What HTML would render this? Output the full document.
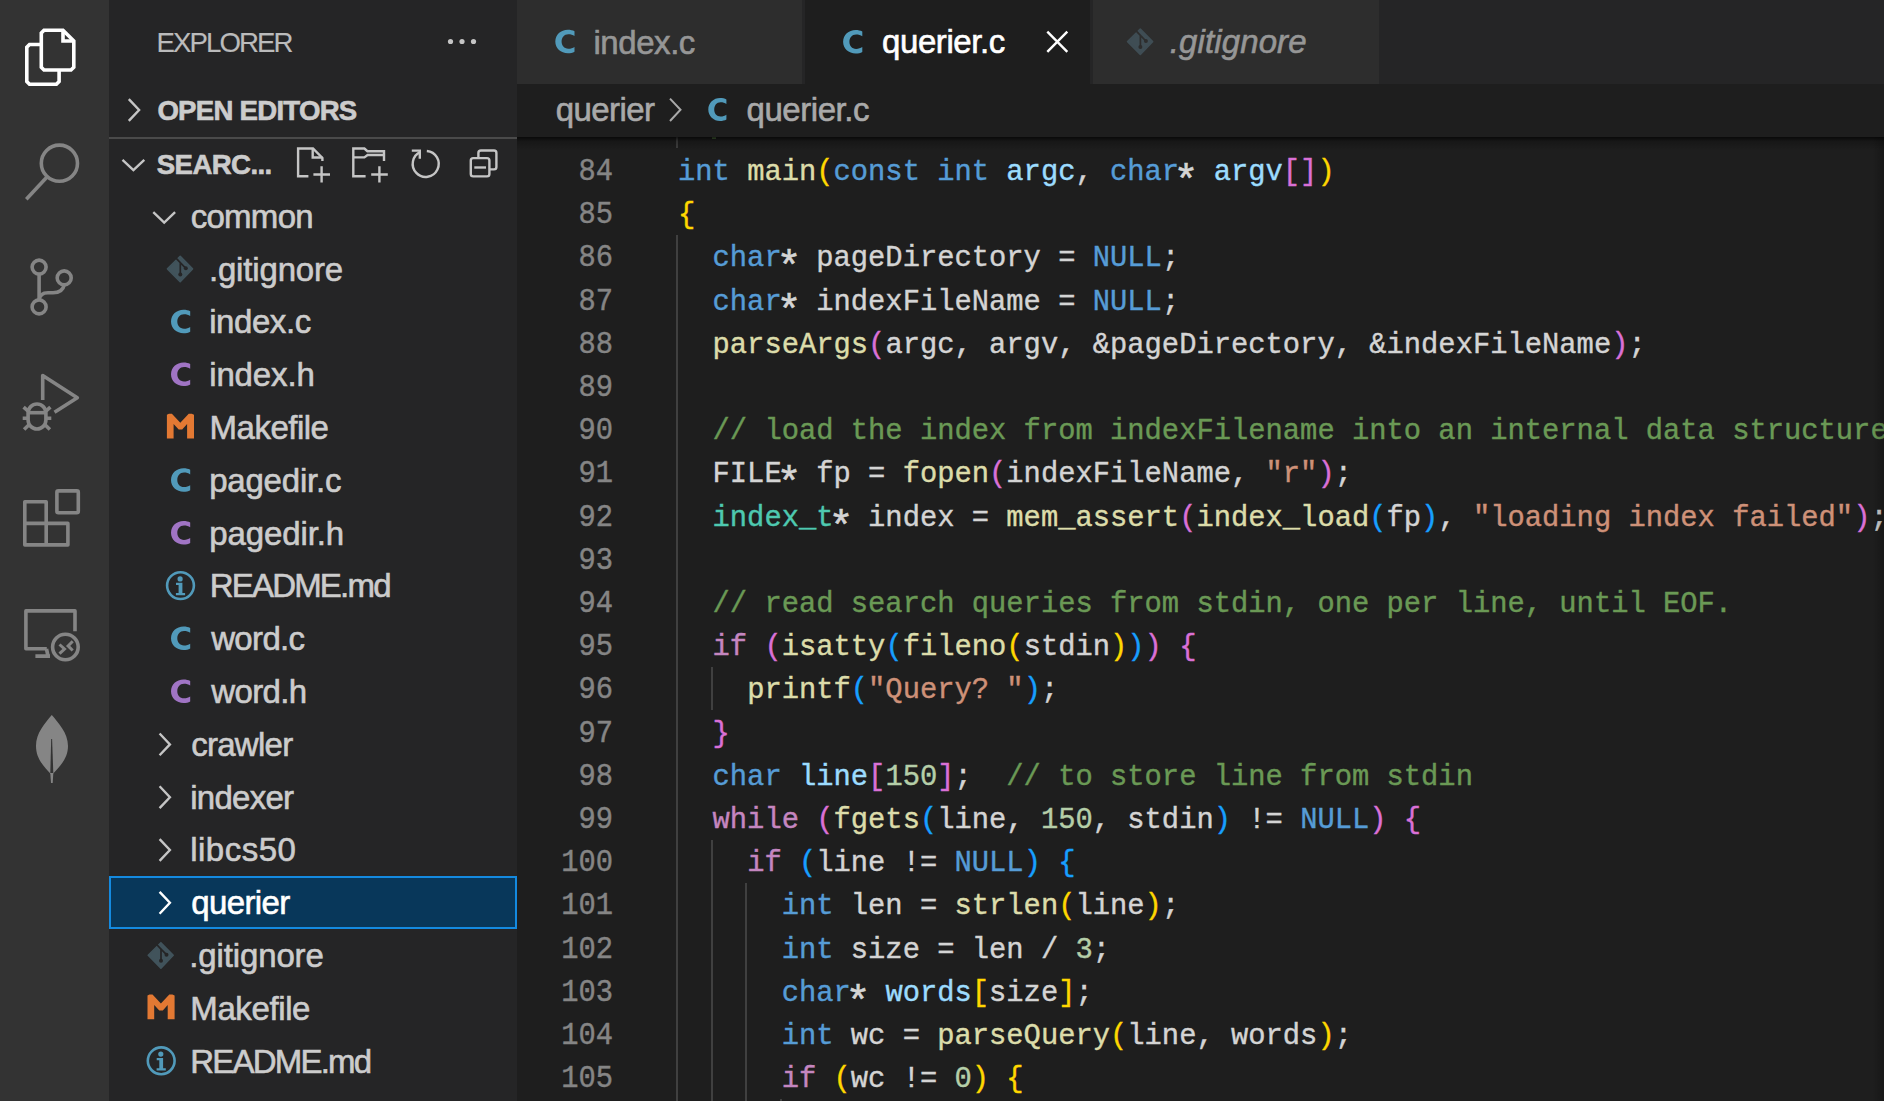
<!DOCTYPE html>
<html><head><meta charset="utf-8">
<style>
*{margin:0;padding:0;box-sizing:border-box}
html,body{width:1884px;height:1101px;overflow:hidden;background:#1e1e1e;font-family:"Liberation Sans",sans-serif}
.abs{position:absolute}
#act{left:0;top:0;width:109px;height:1101px;background:#333333}
#side{left:109px;top:0;width:408px;height:1101px;background:#252526}
#tabs{left:517px;top:0;width:1367px;height:84px;background:#252526}
.tab{position:absolute;top:0;height:84px;background:#2d2d2d}
.tab.active{background:#1e1e1e}
#crumbs{left:517px;top:84px;width:1367px;height:53px;background:#1e1e1e}
#code{left:517px;top:137px;width:1367px;height:964px;background:#1e1e1e;overflow:hidden}
#shadow{left:517px;top:137px;width:1367px;height:14px;background:linear-gradient(#000000 0%,rgba(0,0,0,0.35) 30%,rgba(0,0,0,0) 100%);opacity:0.7}
.ln{position:absolute;left:0;-webkit-text-stroke:0.4px currentColor;width:96px;text-align:right;color:#858585;font-family:"Liberation Mono",monospace;font-size:28.8px;line-height:43.2px;height:43.2px}
.cl{position:absolute;left:161px;-webkit-text-stroke:0.4px currentColor;white-space:pre;color:#d4d4d4;font-family:"Liberation Mono",monospace;font-size:28.8px;line-height:43.2px;height:43.2px}
.k{color:#569cd6}.c{color:#c586c0}.f{color:#dcdcaa}.v{color:#9cdcfe}.cm{color:#6a9955}.s{color:#ce9178}.n{color:#b5cea8}.t{color:#4ec9b0}
.b1{color:#ffd700}.b2{color:#da70d6}.b3{color:#179fff}
.guide{position:absolute;width:2px;background:#404040}
.lbl{position:absolute;white-space:pre;line-height:1;font-family:"Liberation Sans",sans-serif;-webkit-text-stroke:0.6px currentColor}
.ov{position:absolute;left:0;top:0}
.ast{display:inline-block;transform-origin:50% 12.1px;transform:translate(-1.6px,5.9px) scale(1.45)}
.ln{transform-origin:50% 29px;transform:scaleY(1.1)}

</style></head><body>
<div id="act" class="abs"></div>
<div id="side" class="abs"></div>
<div class="abs" style="left:109px;top:137px;width:408px;height:2.4px;background:#4a4a4a"></div>
<div class="abs" style="left:109px;top:876px;width:408px;height:53px;background:#08375a;border:2.3px solid #148ae0"></div>
<div id="tabs" class="abs">
  <div class="tab" style="left:0;width:285px"></div>
  <div class="tab active" style="left:288px;width:285px"></div>
  <div class="tab" style="left:576px;width:286px"></div>
</div>
<div id="crumbs" class="abs"></div>
<div id="code" class="abs">
<div class="guide" style="left:159.2px;top:-31.8px;height:43.2px"></div>
<div class="guide" style="left:159.2px;top:97.8px;height:907.2px"></div>
<div class="guide" style="left:193.8px;top:529.8px;height:43.2px"></div>
<div class="guide" style="left:193.8px;top:702.6px;height:302.4px"></div>
<div class="guide" style="left:228.3px;top:745.8px;height:259.2px"></div>
<div class="guide" style="left:262.9px;top:961.8px;height:43.2px"></div>
<div style="position:absolute;left:195px;top:0;width:4px;height:2px;background:#4b6b3c"></div>
<div class="ln" style="top:13.9px">84</div>
<div class="cl" style="top:13.9px"><span class="k">int</span> <span class="f">main</span><span class="b1">(</span><span class="k">const</span> <span class="k">int</span> <span class="v">argc</span>, <span class="k">char</span><span class="ast">*</span> <span class="v">argv</span><span class="b2">[]</span><span class="b1">)</span></div>
<div class="ln" style="top:57.1px">85</div>
<div class="cl" style="top:57.1px"><span class="b1">{</span></div>
<div class="ln" style="top:100.3px">86</div>
<div class="cl" style="top:100.3px">  <span class="k">char</span><span class="ast">*</span> pageDirectory = <span class="k">NULL</span>;</div>
<div class="ln" style="top:143.5px">87</div>
<div class="cl" style="top:143.5px">  <span class="k">char</span><span class="ast">*</span> indexFileName = <span class="k">NULL</span>;</div>
<div class="ln" style="top:186.7px">88</div>
<div class="cl" style="top:186.7px">  <span class="f">parseArgs</span><span class="b2">(</span>argc, argv, &amp;pageDirectory, &amp;indexFileName<span class="b2">)</span>;</div>
<div class="ln" style="top:229.9px">89</div>
<div class="cl" style="top:229.9px"></div>
<div class="ln" style="top:273.1px">90</div>
<div class="cl" style="top:273.1px">  <span class="cm">// load the index from indexFilename into an internal data structure</span></div>
<div class="ln" style="top:316.3px">91</div>
<div class="cl" style="top:316.3px">  FILE<span class="ast">*</span> fp = <span class="f">fopen</span><span class="b2">(</span>indexFileName, <span class="s">&quot;r&quot;</span><span class="b2">)</span>;</div>
<div class="ln" style="top:359.5px">92</div>
<div class="cl" style="top:359.5px">  <span class="t">index_t</span><span class="ast">*</span> index = <span class="f">mem_assert</span><span class="b2">(</span><span class="f">index_load</span><span class="b3">(</span>fp<span class="b3">)</span>, <span class="s">&quot;loading index failed&quot;</span><span class="b2">)</span>;</div>
<div class="ln" style="top:402.7px">93</div>
<div class="cl" style="top:402.7px"></div>
<div class="ln" style="top:445.9px">94</div>
<div class="cl" style="top:445.9px">  <span class="cm">// read search queries from stdin, one per line, until EOF.</span></div>
<div class="ln" style="top:489.1px">95</div>
<div class="cl" style="top:489.1px">  <span class="c">if</span> <span class="b2">(</span><span class="f">isatty</span><span class="b3">(</span><span class="f">fileno</span><span class="b1">(</span>stdin<span class="b1">)</span><span class="b3">)</span><span class="b2">)</span> <span class="b2">{</span></div>
<div class="ln" style="top:532.3px">96</div>
<div class="cl" style="top:532.3px">    <span class="f">printf</span><span class="b3">(</span><span class="s">&quot;Query? &quot;</span><span class="b3">)</span>;</div>
<div class="ln" style="top:575.5px">97</div>
<div class="cl" style="top:575.5px">  <span class="b2">}</span></div>
<div class="ln" style="top:618.7px">98</div>
<div class="cl" style="top:618.7px">  <span class="k">char</span> <span class="v">line</span><span class="b2">[</span><span class="n">150</span><span class="b2">]</span>;  <span class="cm">// to store line from stdin</span></div>
<div class="ln" style="top:661.9px">99</div>
<div class="cl" style="top:661.9px">  <span class="c">while</span> <span class="b2">(</span><span class="f">fgets</span><span class="b3">(</span>line, <span class="n">150</span>, stdin<span class="b3">)</span> != <span class="k">NULL</span><span class="b2">)</span> <span class="b2">{</span></div>
<div class="ln" style="top:705.1px">100</div>
<div class="cl" style="top:705.1px">    <span class="c">if</span> <span class="b3">(</span>line != <span class="k">NULL</span><span class="b3">)</span> <span class="b3">{</span></div>
<div class="ln" style="top:748.3px">101</div>
<div class="cl" style="top:748.3px">      <span class="k">int</span> len = <span class="f">strlen</span><span class="b1">(</span>line<span class="b1">)</span>;</div>
<div class="ln" style="top:791.5px">102</div>
<div class="cl" style="top:791.5px">      <span class="k">int</span> size = len / <span class="n">3</span>;</div>
<div class="ln" style="top:834.7px">103</div>
<div class="cl" style="top:834.7px">      <span class="k">char</span><span class="ast">*</span> <span class="v">words</span><span class="b1">[</span>size<span class="b1">]</span>;</div>
<div class="ln" style="top:877.9px">104</div>
<div class="cl" style="top:877.9px">      <span class="k">int</span> wc = <span class="f">parseQuery</span><span class="b1">(</span>line, words<span class="b1">)</span>;</div>
<div class="ln" style="top:921.1px">105</div>
<div class="cl" style="top:921.1px">      <span class="c">if</span> <span class="b1">(</span>wc != <span class="n">0</span><span class="b1">)</span> <span class="b1">{</span></div>
</div>
<div id="shadow" class="abs"></div>
<div class="lbl" style="left:190.7px;top:199.8px;font-size:33px;letter-spacing:-0.72px;color:#cccccc">common</div>
<div class="lbl" style="left:208.9px;top:252.6px;font-size:33px;letter-spacing:-0.16px;color:#cccccc">.gitignore</div>
<div class="lbl" style="left:209.2px;top:305.4px;font-size:33px;letter-spacing:-0.43px;color:#cccccc">index.c</div>
<div class="lbl" style="left:209.2px;top:358.2px;font-size:33px;letter-spacing:-0.13px;color:#cccccc">index.h</div>
<div class="lbl" style="left:209.6px;top:411.0px;font-size:33px;letter-spacing:-0.51px;color:#cccccc">Makefile</div>
<div class="lbl" style="left:209.2px;top:463.8px;font-size:33px;letter-spacing:-0.21px;color:#cccccc">pagedir.c</div>
<div class="lbl" style="left:209.2px;top:516.6px;font-size:33px;letter-spacing:-0.10px;color:#cccccc">pagedir.h</div>
<div class="lbl" style="left:209.7px;top:569.4px;font-size:33px;letter-spacing:-1.80px;color:#cccccc">README.md</div>
<div class="lbl" style="left:211.2px;top:622.2px;font-size:33px;letter-spacing:-0.66px;color:#cccccc">word.c</div>
<div class="lbl" style="left:211.2px;top:675.0px;font-size:33px;letter-spacing:-0.62px;color:#cccccc">word.h</div>
<div class="lbl" style="left:191.2px;top:727.8px;font-size:33px;letter-spacing:-0.73px;color:#cccccc">crawler</div>
<div class="lbl" style="left:190.2px;top:780.6px;font-size:33px;letter-spacing:-0.73px;color:#cccccc">indexer</div>
<div class="lbl" style="left:190.2px;top:833.4px;font-size:33px;letter-spacing:0.50px;color:#cccccc">libcs50</div>
<div class="lbl" style="left:191.2px;top:886.2px;font-size:33px;letter-spacing:-0.62px;color:#ffffff">querier</div>
<div class="lbl" style="left:189.3px;top:939.0px;font-size:33px;letter-spacing:-0.14px;color:#cccccc">.gitignore</div>
<div class="lbl" style="left:190.3px;top:991.8px;font-size:33px;letter-spacing:-0.39px;color:#cccccc">Makefile</div>
<div class="lbl" style="left:190.3px;top:1044.6px;font-size:33px;letter-spacing:-1.80px;color:#cccccc">README.md</div>
<div class="lbl" style="left:156.4px;top:29.2px;font-size:27.6px;-webkit-text-stroke:0.15px currentColor;letter-spacing:-1.89px;color:#bbbbbb">EXPLORER</div>
<div class="lbl" style="left:157.4px;top:96.6px;font-size:27.6px;font-weight:bold;letter-spacing:-0.74px;color:#cccccc">OPEN EDITORS</div>
<div class="lbl" style="left:156.8px;top:151.2px;font-size:27.6px;font-weight:bold;letter-spacing:-0.59px;color:#cccccc">SEARC...</div>
<div class="lbl" style="left:593.4px;top:25.8px;font-size:33px;letter-spacing:-0.43px;color:#969696">index.c</div>
<div class="lbl" style="left:882.1px;top:25.4px;font-size:33px;letter-spacing:-0.44px;color:#ffffff">querier.c</div>
<div class="lbl" style="left:1169.8px;top:25.3px;font-size:33px;font-style:italic;letter-spacing:0.11px;color:#969696">.gitignore</div>
<div class="lbl" style="left:555.7px;top:92.6px;font-size:33px;letter-spacing:-0.58px;color:#a9a9a9">querier</div>
<div class="lbl" style="left:746.5px;top:92.6px;font-size:33px;letter-spacing:-0.44px;color:#a9a9a9">querier.c</div>
<svg class="ov" width="1884" height="1101" viewBox="0 0 1884 1101"><g fill="none" stroke="#ffffff" stroke-width="3.6" stroke-linejoin="miter"><path d="M41.3 33L44 30.2L63 30.2L73.8 41L73.8 67.3L71 70L44 70L41.3 67.3Z"/><path d="M63 30.2L63 41L73.8 41"/><path d="M41.3 44.5L29.5 44.5L26.8 47.2L26.8 81.6L29.5 84.3L56.4 84.3L59.1 81.6L59.1 70"/></g><g fill="none" stroke="#858585" stroke-width="3.6"><circle cx="59.4" cy="163.2" r="18.1"/><path d="M47 177L26.3 199.2"/></g><g fill="none" stroke="#858585" stroke-width="3.6"><circle cx="39.1" cy="267.1" r="7"/><circle cx="64.2" cy="277.9" r="7"/><circle cx="39.1" cy="306.9" r="7"/><path d="M39.1 274.1L39.1 299.9"/><path d="M64.2 284.9C63 291 58 292.7 53 292.7L48 292.7C43 292.7 39.6 295 39.1 300"/></g><g fill="none" stroke="#858585" stroke-width="3.6"><path stroke-linejoin="round" d="M42.7 400L42.7 375.5L77.3 397.7L54.5 412.3"/><path d="M28.1 412.9A8.9 8.9 0 0 1 45.9 412.9L45.9 420.1A8.9 8.9 0 0 1 28.1 420.1Z"/><path d="M28.1 412.7L45.9 412.7"/><path d="M23.6 407.2L29 411.8M22.7 418.3L28 418.3M24.1 429.5L29.5 424.3M50.4 407.2L45 411.8M51.3 418.3L46 418.3M49.9 429.5L44.5 424.3"/></g><g fill="none" stroke="#858585" stroke-width="3.6" stroke-linejoin="round"><rect x="56.9" y="490.9" width="21.4" height="21.8" rx="1.5"/><path d="M24.8 523.4L67.9 523.4L67.9 544.9L24.8 544.9Z"/><path d="M24.8 523.4L24.8 501.8L46.2 501.8L46.2 544.9"/></g><g fill="none" stroke="#858585" stroke-width="3.6"><path stroke-linejoin="round" d="M46.8 648.8L25.9 648.8L25.9 610.9L75 610.9L75 631.3"/><path d="M35.4 656.1L50 656.1M46.5 649L48 656"/><circle cx="65.4" cy="647" r="12.8"/><path stroke-width="3" d="M59.5 644.5L64.5 649L59.5 653.6M72.7 641.3L68.1 645.9L72.7 650.5"/></g><path fill="#858585" d="M51.8 715C45 723 36 733 36 746C36 758 43 766 51.8 775C60.5 766 68 758 68 746C68 733 58.5 723 51.8 715Z"/><path fill="#858585" d="M50.3 773L53.3 773L52.7 783L51 783Z"/><path fill="#333333" d="M51.2 739L52.1 739L53.3 773L50.3 773Z"/><g fill="#c5c5c5"><circle cx="450.5" cy="41.5" r="2.6"/><circle cx="462" cy="41.5" r="2.6"/><circle cx="473.5" cy="41.5" r="2.6"/></g><path d="M128.8 99.1L139.1 110.0L128.8 120.9" fill="none" stroke="#c5c5c5" stroke-width="2.4"/><path d="M122.5 159.8L133.4 170.1L144.3 159.8" fill="none" stroke="#c5c5c5" stroke-width="2.4"/><g fill="none" stroke="#c5c5c5" stroke-width="2.4"><path d="M308.4 176.2L298.1 176.2L298.1 148.5L313 148.5L322.4 157.9L322.4 161"/><path d="M312.7 148.5L312.7 157.5L322.4 157.5"/><path d="M321.6 166.3L321.6 182.6M313.4 174.5L330 174.5"/><path d="M365.6 176.2L353.3 176.2L353.3 148.5L364.4 148.5L367.4 151.2L384 151.2L384 161"/><path d="M353.3 157.4L364.4 157.4L367.6 155L384 155"/><path d="M379.4 166.3L379.4 182.6M371.2 174.5L387.8 174.5"/><path d="M420.64 151.93A13 13 0 1 0 426.83 150.95"/><path d="M411.8 150.6L419.8 150.6L419.8 158.7"/><rect x="470.8" y="158.1" width="18.6" height="18.3" rx="2.4"/><path d="M478.4 158.1L478.4 153Q478.4 150.5 481 150.5L494 150.5Q496.4 150.5 496.4 153L496.4 167Q496.4 169.4 494 169.4L489.4 169.4"/><path d="M474.3 167.5L486 167.5"/></g><path d="M153.3 212.2L164.2 222.5L175.1 212.2" fill="none" stroke="#c5c5c5" stroke-width="2.4"/><g transform="translate(180.2 268.9)"><path d="M0 -12.6L12.3 0L0 12.8L-12.7 0Z" fill="#41535b" stroke="#41535b" stroke-width="1.6" stroke-linejoin="round"/><path d="M-4.2 -10.8L0.1 -6.2L0.1 5.5M0.1 -6.2L5.6 -0.6" stroke="#252526" stroke-width="1.7" fill="none"/><circle cx="0.1" cy="5.5" r="2" fill="#252526"/><circle cx="5.6" cy="-0.6" r="2" fill="#252526"/></g><path transform="translate(171.0 309.8) scale(1.0 1.0)" fill="#519aba" d="M19.2 1.5C17.5 .5 15 0 12.5 0C5.5 0 0 5 0 11.75C0 18.5 5.5 23.5 12.5 23.5C15 23.5 17.5 23 19.2 22L19.2 17.1C17.5 18.3 15.5 18.9 13 18.9C8.8 18.9 6.3 15.8 6.3 11.75C6.3 7.7 8.8 4.4 13 4.4C15.5 4.4 17.5 5 19.2 6.2Z"/><path transform="translate(171.0 362.59999999999997) scale(1.0 1.0)" fill="#a074c4" d="M19.2 1.5C17.5 .5 15 0 12.5 0C5.5 0 0 5 0 11.75C0 18.5 5.5 23.5 12.5 23.5C15 23.5 17.5 23 19.2 22L19.2 17.1C17.5 18.3 15.5 18.9 13 18.9C8.8 18.9 6.3 15.8 6.3 11.75C6.3 7.7 8.8 4.4 13 4.4C15.5 4.4 17.5 5 19.2 6.2Z"/><path transform="translate(166.9 413.79999999999995)" fill="#e37933" d="M0 1L2 0L5 0L13.4 9L21.8 0L24.9 0L27.1 1L27.1 24.7L20.2 24.7L20.2 10.3L15.3 15.8L11.8 15.8L6.7 10.3L6.7 24.7L0 24.7Z"/><path transform="translate(171.0 468.2) scale(1.0 1.0)" fill="#519aba" d="M19.2 1.5C17.5 .5 15 0 12.5 0C5.5 0 0 5 0 11.75C0 18.5 5.5 23.5 12.5 23.5C15 23.5 17.5 23 19.2 22L19.2 17.1C17.5 18.3 15.5 18.9 13 18.9C8.8 18.9 6.3 15.8 6.3 11.75C6.3 7.7 8.8 4.4 13 4.4C15.5 4.4 17.5 5 19.2 6.2Z"/><path transform="translate(171.0 520.9999999999999) scale(1.0 1.0)" fill="#a074c4" d="M19.2 1.5C17.5 .5 15 0 12.5 0C5.5 0 0 5 0 11.75C0 18.5 5.5 23.5 12.5 23.5C15 23.5 17.5 23 19.2 22L19.2 17.1C17.5 18.3 15.5 18.9 13 18.9C8.8 18.9 6.3 15.8 6.3 11.75C6.3 7.7 8.8 4.4 13 4.4C15.5 4.4 17.5 5 19.2 6.2Z"/><g transform="translate(180.5 585.5999999999999)"><circle r="13.4" fill="none" stroke="#519aba" stroke-width="2.6"/><circle cx="-0.4" cy="-6.7" r="2.6" fill="#519aba"/><path d="M-4.5 -2.8L1.9 -2.8L1.9 7.4L4.6 7.4L4.6 9.6L-4.6 9.6L-4.6 7.4L-1.9 7.4L-1.9 -0.6L-4.5 -0.6Z" fill="#519aba"/></g><path transform="translate(171.0 626.5999999999999) scale(1.0 1.0)" fill="#519aba" d="M19.2 1.5C17.5 .5 15 0 12.5 0C5.5 0 0 5 0 11.75C0 18.5 5.5 23.5 12.5 23.5C15 23.5 17.5 23 19.2 22L19.2 17.1C17.5 18.3 15.5 18.9 13 18.9C8.8 18.9 6.3 15.8 6.3 11.75C6.3 7.7 8.8 4.4 13 4.4C15.5 4.4 17.5 5 19.2 6.2Z"/><path transform="translate(171.0 679.4) scale(1.0 1.0)" fill="#a074c4" d="M19.2 1.5C17.5 .5 15 0 12.5 0C5.5 0 0 5 0 11.75C0 18.5 5.5 23.5 12.5 23.5C15 23.5 17.5 23 19.2 22L19.2 17.1C17.5 18.3 15.5 18.9 13 18.9C8.8 18.9 6.3 15.8 6.3 11.75C6.3 7.7 8.8 4.4 13 4.4C15.5 4.4 17.5 5 19.2 6.2Z"/><path d="M159.6 733.5L169.9 744.4L159.6 755.3" fill="none" stroke="#c5c5c5" stroke-width="2.4"/><path d="M159.6 786.3L169.9 797.2L159.6 808.1" fill="none" stroke="#c5c5c5" stroke-width="2.4"/><path d="M159.6 839.1L169.9 850.0L159.6 860.9" fill="none" stroke="#c5c5c5" stroke-width="2.4"/><path d="M159.6 891.9L169.9 902.8L159.6 913.7" fill="none" stroke="#ffffff" stroke-width="2.4"/><g transform="translate(160.9 955.3)"><path d="M0 -12.6L12.3 0L0 12.8L-12.7 0Z" fill="#41535b" stroke="#41535b" stroke-width="1.6" stroke-linejoin="round"/><path d="M-4.2 -10.8L0.1 -6.2L0.1 5.5M0.1 -6.2L5.6 -0.6" stroke="#252526" stroke-width="1.7" fill="none"/><circle cx="0.1" cy="5.5" r="2" fill="#252526"/><circle cx="5.6" cy="-0.6" r="2" fill="#252526"/></g><path transform="translate(147.5 994.6)" fill="#e37933" d="M0 1L2 0L5 0L13.4 9L21.8 0L24.9 0L27.1 1L27.1 24.7L20.2 24.7L20.2 10.3L15.3 15.8L11.8 15.8L6.7 10.3L6.7 24.7L0 24.7Z"/><g transform="translate(161.2 1060.8)"><circle r="13.4" fill="none" stroke="#519aba" stroke-width="2.6"/><circle cx="-0.4" cy="-6.7" r="2.6" fill="#519aba"/><path d="M-4.5 -2.8L1.9 -2.8L1.9 7.4L4.6 7.4L4.6 9.6L-4.6 9.6L-4.6 7.4L-1.9 7.4L-1.9 -0.6L-4.5 -0.6Z" fill="#519aba"/></g><path transform="translate(555.3 29.8) scale(1.0 1.0)" fill="#519aba" d="M19.2 1.5C17.5 .5 15 0 12.5 0C5.5 0 0 5 0 11.75C0 18.5 5.5 23.5 12.5 23.5C15 23.5 17.5 23 19.2 22L19.2 17.1C17.5 18.3 15.5 18.9 13 18.9C8.8 18.9 6.3 15.8 6.3 11.75C6.3 7.7 8.8 4.4 13 4.4C15.5 4.4 17.5 5 19.2 6.2Z"/><path transform="translate(843.1 30.0) scale(1.0 1.0)" fill="#519aba" d="M19.2 1.5C17.5 .5 15 0 12.5 0C5.5 0 0 5 0 11.75C0 18.5 5.5 23.5 12.5 23.5C15 23.5 17.5 23 19.2 22L19.2 17.1C17.5 18.3 15.5 18.9 13 18.9C8.8 18.9 6.3 15.8 6.3 11.75C6.3 7.7 8.8 4.4 13 4.4C15.5 4.4 17.5 5 19.2 6.2Z"/><path d="M1047.3 31.7L1067.3 51.9M1067.3 31.7L1047.3 51.9" stroke="#ffffff" stroke-width="2.4" fill="none"/><g transform="translate(1140.3 41.6)"><path d="M0 -12.6L12.3 0L0 12.8L-12.7 0Z" fill="#3f4d54" stroke="#3f4d54" stroke-width="1.6" stroke-linejoin="round"/><path d="M-4.2 -10.8L0.1 -6.2L0.1 5.5M0.1 -6.2L5.6 -0.6" stroke="#2d2d2d" stroke-width="1.7" fill="none"/><circle cx="0.1" cy="5.5" r="2" fill="#2d2d2d"/><circle cx="5.6" cy="-0.6" r="2" fill="#2d2d2d"/></g><path d="M670 98.6L680.5 109.8L670 121" fill="none" stroke="#a9a9a9" stroke-width="2"/><path transform="translate(708.3 98.0) scale(0.9427083333333335 0.9787234042553191)" fill="#519aba" d="M19.2 1.5C17.5 .5 15 0 12.5 0C5.5 0 0 5 0 11.75C0 18.5 5.5 23.5 12.5 23.5C15 23.5 17.5 23 19.2 22L19.2 17.1C17.5 18.3 15.5 18.9 13 18.9C8.8 18.9 6.3 15.8 6.3 11.75C6.3 7.7 8.8 4.4 13 4.4C15.5 4.4 17.5 5 19.2 6.2Z"/></svg>
<div class="abs" style="left:1872px;top:137px;width:12px;height:964px;background:linear-gradient(90deg,rgba(0,0,0,0),rgba(0,0,0,0.22))"></div>

</body></html>
